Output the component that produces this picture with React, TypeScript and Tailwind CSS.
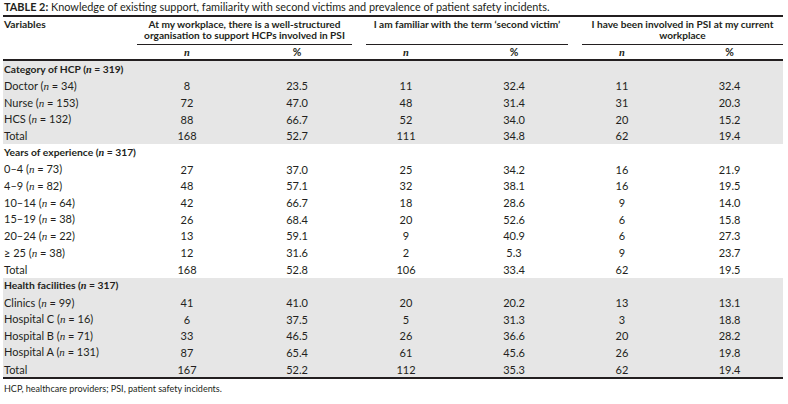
import React from "react";

const N = ({ bold = false }: { bold?: boolean }) => (
  <span className={`italic ${bold ? "font-bold" : ""}`} style={{ fontFamily: '"Liberation Serif", serif' }}>
    n
  </span>
);

type Row = { label: React.ReactNode; v: string[]; head?: boolean };

const lab = (name: string, count: string) => (
  <>
    {name} (<N /> = {count})
  </>
);

const sec1: Row[] = [
  { label: <>Category of HCP (<N bold /> = 319)</>, v: [], head: true },
  { label: lab("Doctor", "34"), v: ["8", "23.5", "11", "32.4", "11", "32.4"] },
  { label: lab("Nurse", "153"), v: ["72", "47.0", "48", "31.4", "31", "20.3"] },
  { label: lab("HCS", "132"), v: ["88", "66.7", "52", "34.0", "20", "15.2"] },
  { label: "Total", v: ["168", "52.7", "111", "34.8", "62", "19.4"] },
];

const sec2: Row[] = [
  { label: <>Years of experience (<N bold /> = 317)</>, v: [], head: true },
  { label: lab("0–4", "73"), v: ["27", "37.0", "25", "34.2", "16", "21.9"] },
  { label: lab("4–9", "82"), v: ["48", "57.1", "32", "38.1", "16", "19.5"] },
  { label: lab("10–14", "64"), v: ["42", "66.7", "18", "28.6", "9", "14.0"] },
  { label: lab("15–19", "38"), v: ["26", "68.4", "20", "52.6", "6", "15.8"] },
  { label: lab("20–24", "22"), v: ["13", "59.1", "9", "40.9", "6", "27.3"] },
  { label: lab("≥ 25", "38"), v: ["12", "31.6", "2", "5.3", "9", "23.7"] },
  { label: "Total", v: ["168", "52.8", "106", "33.4", "62", "19.5"] },
];

const sec3: Row[] = [
  { label: <>Health facilities (<N bold /> = 317)</>, v: [], head: true },
  { label: lab("Clinics", "99"), v: ["41", "41.0", "20", "20.2", "13", "13.1"] },
  { label: lab("Hospital C", "16"), v: ["6", "37.5", "5", "31.3", "3", "18.8"] },
  { label: lab("Hospital B", "71"), v: ["33", "46.5", "26", "36.6", "20", "28.2"] },
  { label: lab("Hospital A", "131"), v: ["87", "65.4", "61", "45.6", "26", "19.8"] },
  { label: "Total", v: ["167", "52.2", "112", "35.3", "62", "19.4"] },
];

const cols = "grid grid-cols-[129px_110px_110px_108px_108px_108px_107px]";

function Section({ rows, gray }: { rows: Row[]; gray?: boolean }) {
  return (
    <div className={gray ? "bg-[#e6e6e6]" : ""}>
      {rows.map((r, i) => (
        <div key={i} className={`${cols} h-[16.67px] items-center`}>
          <div className={`pl-[1px] whitespace-nowrap ${r.head ? "font-bold text-[10.3px]" : ""}`}>{r.label}</div>
          {r.head
            ? null
            : r.v.map((x, j) => (
                <div key={j} className="text-center">
                  {x}
                </div>
              ))}
        </div>
      ))}
    </div>
  );
}

export default function App() {
  return (
    <div
      className="w-[788px] h-[404px] bg-white text-[#231f20] text-[11px] leading-[11px] overflow-hidden"
      style={{ fontFamily: 'Lato, "Liberation Sans", sans-serif' }}
    >
      <div className="pl-[3px] w-[783px]">
        <div className="h-[15px] pt-[1px] pl-[1px] whitespace-nowrap text-[10.9px]">
          <span className="font-bold">TABLE 2:</span> Knowledge of existing support, familiarity with second victims and
          prevalence of patient safety incidents.
        </div>
        <div className="border-t-2 border-[#231f20]" />
        <div className={`${cols} border-b-2 border-[#231f20] text-[10.1px]`}>
          <div className="row-span-2 pt-[2px] pl-[1px] font-bold text-[10.3px]">Variables</div>
          <div className="col-span-2 flex flex-col pl-[5px]">
            <div className="pt-[2px] h-[27px] text-center font-bold whitespace-nowrap">
              At my workplace, there is a well-structured
              <br />
              organisation to support HCPs involved in PSI
            </div>
            <div className="border-t border-[#231f20]" />
          </div>
          <div className="col-span-2 flex flex-col pl-[14px]">
            <div className="pt-[2px] h-[27px] text-center font-bold whitespace-nowrap">
              I am familiar with the term ‘second victim’
            </div>
            <div className="border-t border-[#231f20]" />
          </div>
          <div className="col-span-2 flex flex-col pl-[14px]">
            <div className="pt-[2px] h-[27px] text-center font-bold whitespace-nowrap">
              I have been involved in PSI at my current
              <br />
              workplace
            </div>
            <div className="border-t border-[#231f20]" />
          </div>
          {["n", "%", "n", "%", "n", "%"].map((h, i) => (
            <div key={i} className="h-[14px] flex items-center justify-center font-bold text-[10.5px]">
              {h === "n" ? <N bold /> : "%"}
            </div>
          ))}
        </div>
        <Section rows={sec1} gray />
        <Section rows={sec2} />
        <Section rows={sec3} gray />
        <div className="border-t-2 border-[#231f20]" />
        <div className="pt-[5px] pl-[1px] text-[9px] leading-[10px]">
          HCP, healthcare providers; PSI, patient safety incidents.
        </div>
      </div>
    </div>
  );
}
